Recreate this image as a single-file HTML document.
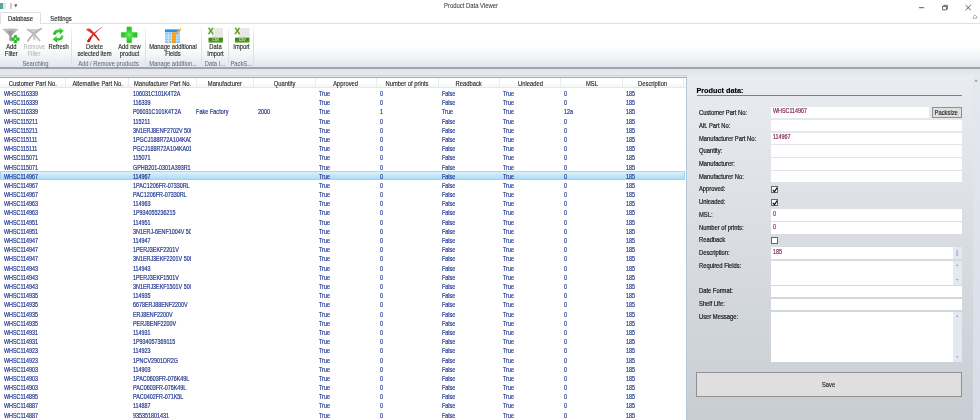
<!DOCTYPE html>
<html lang="en"><head><meta charset="utf-8"><title>Product Data Viewer</title>
<style>
html,body{margin:0;padding:0;}
body{will-change:transform;width:980px;height:420px;overflow:hidden;position:relative;background:#fff;font-family:"Liberation Sans",sans-serif;font-size:6px;color:#2b2b2b;}
div,span{box-sizing:border-box;}
.abs{position:absolute;}
.t{position:absolute;white-space:nowrap;line-height:8px;height:8px;}
.c{text-align:center;}
/* title */
#title{transform:scaleX(.88);left:370.8px;width:200px;top:1.6px;font-size:6.7px;color:#3a3a3a;-webkit-text-stroke:0.06px #3a3a3a;text-align:center;}
/* ribbon */
#ribbon{left:0;top:23.5px;width:980px;height:44px;background:linear-gradient(#ffffff 0%,#ffffff 50%,#f2f5f8 72%,#e2e7ee 96%,#f0f3f6 100%);}
#tabline{left:0;top:22.8px;width:980px;height:1px;background:#dfe1e4;}
#ribline{left:0;top:66.8px;width:980px;height:2.6px;background:linear-gradient(#c9ced5,#858b93 40%,#8a9098 65%,#d3d7dc);}
#band{left:0;top:69.4px;width:980px;height:7.5px;background:linear-gradient(#e1e5ea,#e8ebef);}
#tab1{left:-0.5px;top:11.6px;width:41px;height:12.4px;background:#fff;border:1px solid #dcdee1;border-bottom:none;border-radius:2px 2px 0 0;}
.tabt{transform:scaleX(.88);font-size:6.7px;color:#2a2a2a;top:14.5px;-webkit-text-stroke:0.14px #2a2a2a;}
.rl{transform:scaleX(.88);font-size:6.6px;color:#2a2a2a;-webkit-text-stroke:0.14px #2a2a2a;text-align:center;line-height:6.6px;height:auto;white-space:nowrap;}
.rl.dis{color:#b0b3b7;-webkit-text-stroke:0.04px #b0b3b7;}
.gl{transform:scaleX(.88);font-size:6.6px;color:#646b75;-webkit-text-stroke:0.05px #646b75;text-align:center;top:60px;}
.gsep{position:absolute;top:26px;height:39px;width:1px;background:linear-gradient(rgba(222,226,231,0.2),#dee2e7 40%,#dee2e7);}
/* grid */
.grid{position:absolute;left:0;top:76.8px;width:686.7px;height:343.2px;background:#fff;border-top:1.3px solid #88b3d7;border-right:1px solid #b7c6d6;overflow:hidden;}
.ghead{position:absolute;left:0;top:0;width:686px;height:10.2px;background:linear-gradient(#ffffff,#ffffff 50%,#f4f6f9);border-bottom:1px solid #e4e8ed;}
.gh{transform:scaleX(.88);position:absolute;top:0;height:9.8px;line-height:11.2px;text-align:center;font-size:6.6px;color:#2a2a2a;-webkit-text-stroke:0.14px #2a2a2a;white-space:nowrap;}
.hs{position:absolute;top:0;width:1px;height:9.6px;background:#e9ecef;}
.gr{position:absolute;left:0;width:685px;height:9.19px;}
.gr.sel{background:linear-gradient(#e2f2fc 0%,#c9e8fa 45%,#a6daf6 100%);box-shadow:inset 0 0 0 0.8px #94d1f2;border-radius:1px;}
.gc{position:absolute;top:0;height:9.19px;line-height:11.9px;font-size:6.5px;color:#22398f;white-space:nowrap;overflow:hidden;transform:scaleX(.83);transform-origin:0 50%;-webkit-text-stroke:0.2px #22398f;}

/* panel */
#panel{left:686.7px;top:75.8px;width:293.3px;height:344.2px;background:linear-gradient(#e9ecf0 0%,#dadee3 45%,#c8cdd4 100%);}
#vsb{left:972.5px;top:75.8px;width:7.5px;height:344.2px;background:linear-gradient(#e4e9f0,#d6dde7);}
#pd{left:696.4px;top:86px;font-size:7.3px;font-weight:bold;color:#000;-webkit-text-stroke:0.15px #000;line-height:10px;height:10px;}
#pdl{left:696.5px;top:94.7px;width:265.2px;height:1.7px;background:#7874c6;}
.lb{position:absolute;left:699.3px;transform:scaleX(.88);transform-origin:0 50%;font-size:6.6px;color:#1c1c1c;-webkit-text-stroke:0.2px #111;white-space:nowrap;line-height:8px;height:8px;}
.in{position:absolute;left:770.6px;width:191px;height:11.5px;background:#fff;font-size:6.5px;color:#7c1d4b;-webkit-text-stroke:0.18px #7c1d4b;line-height:7px;padding:0.7px 0 0 2px;white-space:nowrap;}
.in span{display:inline-block;transform:scaleX(.83);transform-origin:0 50%;}
.ck{position:absolute;left:771.2px;width:7.3px;height:6.8px;background:#fff;border:0.6px solid #6a6a6a;}
.btn{position:absolute;background:#dfdfdf;border:0.8px solid #909090;text-align:center;color:#1a1a1a;font-size:6.6px;-webkit-text-stroke:0.12px #1a1a1a;}
.btn span{display:inline-block;transform:scaleX(.88);}
.sb{position:absolute;left:953.4px;width:8.2px;background:#e4e9f1;}

#tan{left:0;top:75.3px;width:686.7px;height:0.8px;background:#d6cec8;}

</style></head><body>
<!-- title bar -->
<div class="abs" style="left:0;top:3px;width:5px;height:6px;background:#2f8f83;border-radius:0.5px;opacity:.8"></div>
<div class="abs" style="left:3px;top:3px;width:3px;height:6px;background:#dfe7ef;"></div>
<div class="abs" style="left:10px;top:3px;width:1.5px;height:6px;background:#c9cdd2;"></div>
<svg class="abs" style="left:14px;top:3.7px" width="3.4" height="3.4" viewBox="0 0 5 5"><path d="M0.5 0.8H4.5" stroke="#333" stroke-width="0.8"/><path d="M0.5 2L2.5 4.3L4.5 2Z" fill="#333"/></svg>
<div id="title" class="t">Product Data Viewer</div>
<svg class="abs" style="left:914px;top:2.6px" width="62" height="10" viewBox="0 0 62 10">
<path d="M5 4.7H10.2" stroke="#333" stroke-width="0.8" fill="none"/>
<rect x="28.7" y="3.3" width="3.6" height="3.6" stroke="#333" stroke-width="0.7" fill="none"/>
<path d="M29.8 3.3V2.3H33.4V5.9H32.3" stroke="#333" stroke-width="0.7" fill="none"/>
<path d="M51.6 2L56.8 7.2M56.8 2L51.6 7.2" stroke="#333" stroke-width="0.8" fill="none"/>
</svg>
<svg class="abs" style="left:972px;top:13.6px" width="6" height="5" viewBox="0 0 6 5"><path d="M0.8 3L3 0.9L5.2 3M1.5 3V4.3H4.5V3" stroke="#777" stroke-width="0.6" fill="none"/></svg>
<!-- tabs -->
<div id="tabline" class="abs"></div>
<div id="ribbon" class="abs"></div>
<div id="tab1" class="abs"></div>
<div class="t tabt c" style="left:0;width:41px;">Database</div>
<div class="t tabt c" style="left:41px;width:40px;">Settings</div>
<div id="ribline" class="abs"></div>
<div id="band" class="abs"></div>
<div id="tan" class="abs"></div>
<!-- ribbon buttons -->
<div class="t rl" style="left:0;width:22.6px;top:44.4px;">Add<br>Filter</div>
<div class="t rl dis" style="left:22px;width:24px;top:44.4px;">Remove<br>Filter</div>
<div class="t rl" style="left:46px;width:25.4px;top:44.4px;">Refresh</div>
<div class="t rl" style="left:72px;width:45px;top:44.4px;">Delete<br>selected item</div>
<div class="t rl" style="left:113px;width:33px;top:44.4px;">Add new<br>product</div>
<div class="t rl" style="left:146px;width:54px;top:44.4px;">Manage additional<br>Fields</div>
<div class="t rl" style="left:203px;width:25px;top:44.4px;">Data<br>Import</div>
<div class="t rl" style="left:229px;width:25px;top:44.4px;">Import</div>
<div class="t gl" style="left:0;width:71px;">Searching</div>
<div class="t gl" style="left:72px;width:73px;">Add / Remove products</div>
<div class="t gl" style="left:146px;width:54px;">Manage addition...</div>
<div class="t gl" style="left:202px;width:26px;">Data I...</div>
<div class="t gl" style="left:229px;width:24px;">PackS...</div>
<div class="gsep" style="left:71px"></div>
<div class="gsep" style="left:145px"></div>
<div class="gsep" style="left:200.5px"></div>
<div class="gsep" style="left:228px"></div>
<div class="gsep" style="left:252.5px"></div>
<!-- icons -->
<svg class="abs" style="left:0;top:26px" width="254" height="18" viewBox="0 0 254 18">
<defs>
<linearGradient id="gfun" x1="0" y1="0" x2="1" y2="0"><stop offset="0" stop-color="#e2e2e2"/><stop offset="0.5" stop-color="#979797"/><stop offset="1" stop-color="#d4d4d4"/></linearGradient>
<linearGradient id="ggr" x1="0" y1="0" x2="0" y2="1"><stop offset="0" stop-color="#55e045"/><stop offset="1" stop-color="#22ad22"/></linearGradient>
<radialGradient id="gplus" cx="0.5" cy="0.5" r="0.6"><stop offset="0" stop-color="#7aea6c"/><stop offset="0.5" stop-color="#2fd02f"/><stop offset="1" stop-color="#18b41c"/></radialGradient>
<linearGradient id="gred" x1="0" y1="0" x2="0" y2="1"><stop offset="0" stop-color="#f23a30"/><stop offset="1" stop-color="#cc100c"/></linearGradient>
<linearGradient id="gxl" x1="0" y1="0" x2="0" y2="1"><stop offset="0" stop-color="#3a7a12"/><stop offset="1" stop-color="#55a024"/></linearGradient>
</defs>
<!-- funnel -->
<path d="M2.4 3.4H18.4L11.7 9.6V15.6L9.3 14.4V9.6Z" fill="url(#gfun)"/>
<ellipse cx="10.4" cy="3.5" rx="8" ry="0.9" fill="#bdbdbd"/>
<path d="M14.1 9.3h2.6v2.5h2.5v2.6h-2.5v2.5h-2.6v-2.5h-2.5v-2.6h2.5z" fill="#25c425" stroke="#1fae22" stroke-width="0.5" stroke-linejoin="round"/>
<circle cx="15.4" cy="13.1" r="1" fill="#b9f5b0"/>
<!-- remove filter (disabled) -->
<path d="M26.6 2.9H41.4L35.6 8.6V14.6L32.9 13.2V8.6Z" fill="#d2d2d2"/>
<path d="M27.9 15C30.5 10.5 36 5.5 41.3 2.6" stroke="#b4b4b4" stroke-width="1.7" fill="none" stroke-linecap="round"/>
<path d="M27.6 3.6C32 6 36.5 10.5 39.6 14.6" stroke="#b9b9b9" stroke-width="1.7" fill="none" stroke-linecap="round"/>
<!-- refresh -->
<g transform="translate(58.3 9.1) scale(0.94 1.12) translate(-59.1 -8.75)">
<path d="M53.6 8.2C53.6 5 57 3.4 60.4 3.9L60.1 1.9L65 4.9L60.9 8.2L60.7 6.2C58.5 5.9 56.3 6.6 55.9 8.9Z" fill="url(#ggr)"/>
<path d="M64.6 9.3C64.6 12.5 61.2 14.1 57.8 13.6L58.1 15.6L53.2 12.6L57.3 9.3L57.5 11.3C59.7 11.6 61.9 10.9 62.3 8.6Z" fill="url(#ggr)"/>
</g>
<!-- delete X -->
<path d="M86.1 3.7C87.2 2.1 89.6 2 90.7 3.2C94.2 6.4 97.6 10.4 99.9 14.3C99.4 14.9 98.8 14.8 98.4 14.4C95.4 10.6 91.4 6.9 86.1 3.7Z" fill="url(#gred)"/>
<path d="M102.1 1.1C96 4.4 91 9.4 87.2 14.4C86.8 16 88 16.7 89.1 16.2C90.6 15.4 90.9 13.5 91.6 12C94.1 8 98.1 4.1 102.3 1.6Z" fill="url(#gred)"/>
<!-- add plus -->
<path d="M126.9 1h4.6v5.6h5.6v4.6h-5.6v5.6h-4.6v-5.6h-5.6v-4.6h5.6z" fill="url(#gplus)" stroke="#2cc62c" stroke-width="0.5" stroke-linejoin="round"/>
<!-- manage fields -->
<rect x="165" y="3.5" width="15" height="13.6" fill="#8ecbf2"/>
<rect x="165" y="3.5" width="15" height="2.9" fill="#1e96e6"/>
<path d="M165 6.6h15M165 9.2h15M165 11.8h15M165 14.4h15M168.4 6.4v10.7M171.8 6.4v10.7M176 6.4v10.7" stroke="#e8f5fd" stroke-width="0.55"/>
<rect x="172" y="6.4" width="4" height="10.7" fill="#ff9a0a"/>
<path d="M172 9.2h4M172 11.8h4M172 14.4h4" stroke="#ffc266" stroke-width="0.5"/>
<path d="M176.3 6.3L180.3 2.3L181.5 3.5L177.5 7.5Z" fill="#f6b02e"/>
<path d="M176.3 6.3L177.5 7.5L175.8 8Z" fill="#c98a2a"/>
<!-- excel 1 -->
<g transform="translate(0 0)">
<rect x="212.3" y="2.2" width="10.4" height="10.5" fill="#ececea" stroke="#dcdcda" stroke-width="0.4"/>
<path d="M215.5 4.5h6.5M215.5 6.3h6.5M215.5 8.1h6.5M213 9.9h9" stroke="#dadad6" stroke-width="0.5"/>
<rect x="208.5" y="11.7" width="14.4" height="4.9" fill="url(#gxl)"/>
<text x="215.7" y="15.4" font-size="3.3" fill="#dcebc9" font-family="Liberation Sans, sans-serif" font-weight="bold" text-anchor="middle">CSV</text>
<text x="208.1" y="8.4" font-size="8.3" fill="#5a9a14" font-family="Liberation Sans, sans-serif" font-weight="bold" stroke="#5a9a14" stroke-width="0.3">X</text>
</g>
<!-- excel 2 -->
<g transform="translate(26.5 0)">
<rect x="212.3" y="2.2" width="10.4" height="10.5" fill="#ececea" stroke="#dcdcda" stroke-width="0.4"/>
<path d="M215.5 4.5h6.5M215.5 6.3h6.5M215.5 8.1h6.5M213 9.9h9" stroke="#dadad6" stroke-width="0.5"/>
<rect x="208.5" y="11.7" width="14.4" height="4.9" fill="url(#gxl)"/>
<text x="215.7" y="15.4" font-size="3.3" fill="#dcebc9" font-family="Liberation Sans, sans-serif" font-weight="bold" text-anchor="middle">CSV</text>
<text x="208.1" y="8.4" font-size="8.3" fill="#5a9a14" font-family="Liberation Sans, sans-serif" font-weight="bold" stroke="#5a9a14" stroke-width="0.3">X</text>
</g>
</svg>
<div class="grid">
<div class="ghead">
<div class="gh" style="left:0.0px;width:65.5px">Customer Part No.</div><div class="hs" style="left:65.0px"></div>
<div class="gh" style="left:65.5px;width:63.2px">Alternative Part No.</div><div class="hs" style="left:128.2px"></div>
<div class="gh" style="left:128.7px;width:67.3px">Manufacturer Part No.</div><div class="hs" style="left:195.5px"></div>
<div class="gh" style="left:196.0px;width:57.8px">Manufacturer</div><div class="hs" style="left:253.3px"></div>
<div class="gh" style="left:253.8px;width:61.2px">Quantity</div><div class="hs" style="left:314.5px"></div>
<div class="gh" style="left:315.0px;width:61.2px">Approved</div><div class="hs" style="left:375.7px"></div>
<div class="gh" style="left:376.2px;width:62.0px">Number of prints</div><div class="hs" style="left:437.7px"></div>
<div class="gh" style="left:438.2px;width:61.3px">Readback</div><div class="hs" style="left:499.0px"></div>
<div class="gh" style="left:499.5px;width:61.0px">Unleaded</div><div class="hs" style="left:560.0px"></div>
<div class="gh" style="left:560.5px;width:61.8px">MSL</div><div class="hs" style="left:621.8px"></div>
<div class="gh" style="left:622.3px;width:61.2px">Description</div><div class="hs" style="left:683.0px"></div>
</div>
<div class="gr" style="top:10.20px"><span class="gc" style="left:3.9px;width:67.7px">WHSC116339</span><span class="gc" style="left:132.6px;width:69.9px">106031C101K4T2A</span><span class="gc" style="left:318.9px;width:62.5px">True</span><span class="gc" style="left:380.1px;width:63.5px">0</span><span class="gc" style="left:442.1px;width:62.7px">False</span><span class="gc" style="left:503.4px;width:62.3px">True</span><span class="gc" style="left:564.4px;width:63.3px">0</span><span class="gc" style="left:626.2px;width:62.5px">185</span></div>
<div class="gr" style="top:19.39px"><span class="gc" style="left:3.9px;width:67.7px">WHSC116339</span><span class="gc" style="left:132.6px;width:69.9px">116339</span><span class="gc" style="left:318.9px;width:62.5px">True</span><span class="gc" style="left:380.1px;width:63.5px">0</span><span class="gc" style="left:442.1px;width:62.7px">False</span><span class="gc" style="left:503.4px;width:62.3px">True</span><span class="gc" style="left:564.4px;width:63.3px">0</span><span class="gc" style="left:626.2px;width:62.5px">185</span></div>
<div class="gr" style="top:28.58px"><span class="gc" style="left:3.9px;width:67.7px">WHSC116339</span><span class="gc" style="left:132.6px;width:69.9px">P06031C101K4T2A</span><span class="gc" style="left:196.3px;width:60px;letter-spacing:0.1px">Fake Factory</span><span class="gc" style="left:257.7px;width:62.5px">2000</span><span class="gc" style="left:318.9px;width:62.5px">True</span><span class="gc" style="left:380.1px;width:63.5px">1</span><span class="gc" style="left:442.1px;width:62.7px">True</span><span class="gc" style="left:503.4px;width:62.3px">True</span><span class="gc" style="left:564.4px;width:63.3px">12a</span><span class="gc" style="left:626.2px;width:62.5px">185</span></div>
<div class="gr" style="top:37.77px"><span class="gc" style="left:3.9px;width:67.7px">WHSC115211</span><span class="gc" style="left:132.6px;width:69.9px">115211</span><span class="gc" style="left:318.9px;width:62.5px">True</span><span class="gc" style="left:380.1px;width:63.5px">0</span><span class="gc" style="left:442.1px;width:62.7px">False</span><span class="gc" style="left:503.4px;width:62.3px">True</span><span class="gc" style="left:564.4px;width:63.3px">0</span><span class="gc" style="left:626.2px;width:62.5px">185</span></div>
<div class="gr" style="top:46.96px"><span class="gc" style="left:3.9px;width:67.7px">WHSC115211</span><span class="gc" style="left:132.6px;width:69.9px">3N1ERJ8ENF2702V 500</span><span class="gc" style="left:318.9px;width:62.5px">True</span><span class="gc" style="left:380.1px;width:63.5px">0</span><span class="gc" style="left:442.1px;width:62.7px">False</span><span class="gc" style="left:503.4px;width:62.3px">True</span><span class="gc" style="left:564.4px;width:63.3px">0</span><span class="gc" style="left:626.2px;width:62.5px">185</span></div>
<div class="gr" style="top:56.15px"><span class="gc" style="left:3.9px;width:67.7px">WHSC115111</span><span class="gc" style="left:132.6px;width:69.9px">1PGCJ188R72A104KA01</span><span class="gc" style="left:318.9px;width:62.5px">True</span><span class="gc" style="left:380.1px;width:63.5px">0</span><span class="gc" style="left:442.1px;width:62.7px">False</span><span class="gc" style="left:503.4px;width:62.3px">True</span><span class="gc" style="left:564.4px;width:63.3px">0</span><span class="gc" style="left:626.2px;width:62.5px">185</span></div>
<div class="gr" style="top:65.34px"><span class="gc" style="left:3.9px;width:67.7px">WHSC115111</span><span class="gc" style="left:132.6px;width:69.9px">PGCJ188R72A104KA01</span><span class="gc" style="left:318.9px;width:62.5px">True</span><span class="gc" style="left:380.1px;width:63.5px">0</span><span class="gc" style="left:442.1px;width:62.7px">False</span><span class="gc" style="left:503.4px;width:62.3px">True</span><span class="gc" style="left:564.4px;width:63.3px">0</span><span class="gc" style="left:626.2px;width:62.5px">185</span></div>
<div class="gr" style="top:74.53px"><span class="gc" style="left:3.9px;width:67.7px">WHSC115071</span><span class="gc" style="left:132.6px;width:69.9px">115071</span><span class="gc" style="left:318.9px;width:62.5px">True</span><span class="gc" style="left:380.1px;width:63.5px">0</span><span class="gc" style="left:442.1px;width:62.7px">False</span><span class="gc" style="left:503.4px;width:62.3px">True</span><span class="gc" style="left:564.4px;width:63.3px">0</span><span class="gc" style="left:626.2px;width:62.5px">185</span></div>
<div class="gr" style="top:83.72px"><span class="gc" style="left:3.9px;width:67.7px">WHSC115071</span><span class="gc" style="left:132.6px;width:69.9px">GPHB201-0301A393R1</span><span class="gc" style="left:318.9px;width:62.5px">True</span><span class="gc" style="left:380.1px;width:63.5px">0</span><span class="gc" style="left:442.1px;width:62.7px">False</span><span class="gc" style="left:503.4px;width:62.3px">True</span><span class="gc" style="left:564.4px;width:63.3px">0</span><span class="gc" style="left:626.2px;width:62.5px">185</span></div>
<div class="gr sel" style="top:92.91px"><span class="gc" style="left:3.9px;width:67.7px">WHSC114967</span><span class="gc" style="left:132.6px;width:69.9px">114967</span><span class="gc" style="left:318.9px;width:62.5px">True</span><span class="gc" style="left:380.1px;width:63.5px">0</span><span class="gc" style="left:442.1px;width:62.7px">False</span><span class="gc" style="left:503.4px;width:62.3px">True</span><span class="gc" style="left:564.4px;width:63.3px">0</span><span class="gc" style="left:626.2px;width:62.5px">185</span></div>
<div class="gr" style="top:102.10px"><span class="gc" style="left:3.9px;width:67.7px">WHSC114967</span><span class="gc" style="left:132.6px;width:69.9px">1PAC1206FR-07330RL</span><span class="gc" style="left:318.9px;width:62.5px">True</span><span class="gc" style="left:380.1px;width:63.5px">0</span><span class="gc" style="left:442.1px;width:62.7px">False</span><span class="gc" style="left:503.4px;width:62.3px">True</span><span class="gc" style="left:564.4px;width:63.3px">0</span><span class="gc" style="left:626.2px;width:62.5px">185</span></div>
<div class="gr" style="top:111.29px"><span class="gc" style="left:3.9px;width:67.7px">WHSC114967</span><span class="gc" style="left:132.6px;width:69.9px">PAC1206FR-07330RL</span><span class="gc" style="left:318.9px;width:62.5px">True</span><span class="gc" style="left:380.1px;width:63.5px">0</span><span class="gc" style="left:442.1px;width:62.7px">False</span><span class="gc" style="left:503.4px;width:62.3px">True</span><span class="gc" style="left:564.4px;width:63.3px">0</span><span class="gc" style="left:626.2px;width:62.5px">185</span></div>
<div class="gr" style="top:120.48px"><span class="gc" style="left:3.9px;width:67.7px">WHSC114963</span><span class="gc" style="left:132.6px;width:69.9px">114963</span><span class="gc" style="left:318.9px;width:62.5px">True</span><span class="gc" style="left:380.1px;width:63.5px">0</span><span class="gc" style="left:442.1px;width:62.7px">False</span><span class="gc" style="left:503.4px;width:62.3px">True</span><span class="gc" style="left:564.4px;width:63.3px">0</span><span class="gc" style="left:626.2px;width:62.5px">185</span></div>
<div class="gr" style="top:129.67px"><span class="gc" style="left:3.9px;width:67.7px">WHSC114963</span><span class="gc" style="left:132.6px;width:69.9px">1P934055236215</span><span class="gc" style="left:318.9px;width:62.5px">True</span><span class="gc" style="left:380.1px;width:63.5px">0</span><span class="gc" style="left:442.1px;width:62.7px">False</span><span class="gc" style="left:503.4px;width:62.3px">True</span><span class="gc" style="left:564.4px;width:63.3px">0</span><span class="gc" style="left:626.2px;width:62.5px">185</span></div>
<div class="gr" style="top:138.86px"><span class="gc" style="left:3.9px;width:67.7px">WHSC114951</span><span class="gc" style="left:132.6px;width:69.9px">114951</span><span class="gc" style="left:318.9px;width:62.5px">True</span><span class="gc" style="left:380.1px;width:63.5px">0</span><span class="gc" style="left:442.1px;width:62.7px">False</span><span class="gc" style="left:503.4px;width:62.3px">True</span><span class="gc" style="left:564.4px;width:63.3px">0</span><span class="gc" style="left:626.2px;width:62.5px">185</span></div>
<div class="gr" style="top:148.05px"><span class="gc" style="left:3.9px;width:67.7px">WHSC114951</span><span class="gc" style="left:132.6px;width:69.9px">3N1ERJ-6ENF1004V 50</span><span class="gc" style="left:318.9px;width:62.5px">True</span><span class="gc" style="left:380.1px;width:63.5px">0</span><span class="gc" style="left:442.1px;width:62.7px">False</span><span class="gc" style="left:503.4px;width:62.3px">True</span><span class="gc" style="left:564.4px;width:63.3px">0</span><span class="gc" style="left:626.2px;width:62.5px">185</span></div>
<div class="gr" style="top:157.24px"><span class="gc" style="left:3.9px;width:67.7px">WHSC114947</span><span class="gc" style="left:132.6px;width:69.9px">114947</span><span class="gc" style="left:318.9px;width:62.5px">True</span><span class="gc" style="left:380.1px;width:63.5px">0</span><span class="gc" style="left:442.1px;width:62.7px">False</span><span class="gc" style="left:503.4px;width:62.3px">True</span><span class="gc" style="left:564.4px;width:63.3px">0</span><span class="gc" style="left:626.2px;width:62.5px">185</span></div>
<div class="gr" style="top:166.43px"><span class="gc" style="left:3.9px;width:67.7px">WHSC114947</span><span class="gc" style="left:132.6px;width:69.9px">1PERJ3EKF2201V</span><span class="gc" style="left:318.9px;width:62.5px">True</span><span class="gc" style="left:380.1px;width:63.5px">0</span><span class="gc" style="left:442.1px;width:62.7px">False</span><span class="gc" style="left:503.4px;width:62.3px">True</span><span class="gc" style="left:564.4px;width:63.3px">0</span><span class="gc" style="left:626.2px;width:62.5px">185</span></div>
<div class="gr" style="top:175.62px"><span class="gc" style="left:3.9px;width:67.7px">WHSC114947</span><span class="gc" style="left:132.6px;width:69.9px">3N1ERJ3EKF2201V 500</span><span class="gc" style="left:318.9px;width:62.5px">True</span><span class="gc" style="left:380.1px;width:63.5px">0</span><span class="gc" style="left:442.1px;width:62.7px">False</span><span class="gc" style="left:503.4px;width:62.3px">True</span><span class="gc" style="left:564.4px;width:63.3px">0</span><span class="gc" style="left:626.2px;width:62.5px">185</span></div>
<div class="gr" style="top:184.81px"><span class="gc" style="left:3.9px;width:67.7px">WHSC114943</span><span class="gc" style="left:132.6px;width:69.9px">114943</span><span class="gc" style="left:318.9px;width:62.5px">True</span><span class="gc" style="left:380.1px;width:63.5px">0</span><span class="gc" style="left:442.1px;width:62.7px">False</span><span class="gc" style="left:503.4px;width:62.3px">True</span><span class="gc" style="left:564.4px;width:63.3px">0</span><span class="gc" style="left:626.2px;width:62.5px">185</span></div>
<div class="gr" style="top:194.00px"><span class="gc" style="left:3.9px;width:67.7px">WHSC114943</span><span class="gc" style="left:132.6px;width:69.9px">1PERJ3EKF1501V</span><span class="gc" style="left:318.9px;width:62.5px">True</span><span class="gc" style="left:380.1px;width:63.5px">0</span><span class="gc" style="left:442.1px;width:62.7px">False</span><span class="gc" style="left:503.4px;width:62.3px">True</span><span class="gc" style="left:564.4px;width:63.3px">0</span><span class="gc" style="left:626.2px;width:62.5px">185</span></div>
<div class="gr" style="top:203.19px"><span class="gc" style="left:3.9px;width:67.7px">WHSC114943</span><span class="gc" style="left:132.6px;width:69.9px">3N1ERJ3EKF1501V 500</span><span class="gc" style="left:318.9px;width:62.5px">True</span><span class="gc" style="left:380.1px;width:63.5px">0</span><span class="gc" style="left:442.1px;width:62.7px">False</span><span class="gc" style="left:503.4px;width:62.3px">True</span><span class="gc" style="left:564.4px;width:63.3px">0</span><span class="gc" style="left:626.2px;width:62.5px">185</span></div>
<div class="gr" style="top:212.38px"><span class="gc" style="left:3.9px;width:67.7px">WHSC114935</span><span class="gc" style="left:132.6px;width:69.9px">114935</span><span class="gc" style="left:318.9px;width:62.5px">True</span><span class="gc" style="left:380.1px;width:63.5px">0</span><span class="gc" style="left:442.1px;width:62.7px">False</span><span class="gc" style="left:503.4px;width:62.3px">True</span><span class="gc" style="left:564.4px;width:63.3px">0</span><span class="gc" style="left:626.2px;width:62.5px">185</span></div>
<div class="gr" style="top:221.57px"><span class="gc" style="left:3.9px;width:67.7px">WHSC114935</span><span class="gc" style="left:132.6px;width:69.9px">6678ERJ88ENF2200V</span><span class="gc" style="left:318.9px;width:62.5px">True</span><span class="gc" style="left:380.1px;width:63.5px">0</span><span class="gc" style="left:442.1px;width:62.7px">False</span><span class="gc" style="left:503.4px;width:62.3px">True</span><span class="gc" style="left:564.4px;width:63.3px">0</span><span class="gc" style="left:626.2px;width:62.5px">185</span></div>
<div class="gr" style="top:230.76px"><span class="gc" style="left:3.9px;width:67.7px">WHSC114935</span><span class="gc" style="left:132.6px;width:69.9px">ERJ8ENF2200V</span><span class="gc" style="left:318.9px;width:62.5px">True</span><span class="gc" style="left:380.1px;width:63.5px">0</span><span class="gc" style="left:442.1px;width:62.7px">False</span><span class="gc" style="left:503.4px;width:62.3px">True</span><span class="gc" style="left:564.4px;width:63.3px">0</span><span class="gc" style="left:626.2px;width:62.5px">185</span></div>
<div class="gr" style="top:239.95px"><span class="gc" style="left:3.9px;width:67.7px">WHSC114935</span><span class="gc" style="left:132.6px;width:69.9px">PERJ8ENF2200V</span><span class="gc" style="left:318.9px;width:62.5px">True</span><span class="gc" style="left:380.1px;width:63.5px">0</span><span class="gc" style="left:442.1px;width:62.7px">False</span><span class="gc" style="left:503.4px;width:62.3px">True</span><span class="gc" style="left:564.4px;width:63.3px">0</span><span class="gc" style="left:626.2px;width:62.5px">185</span></div>
<div class="gr" style="top:249.14px"><span class="gc" style="left:3.9px;width:67.7px">WHSC114931</span><span class="gc" style="left:132.6px;width:69.9px">114931</span><span class="gc" style="left:318.9px;width:62.5px">True</span><span class="gc" style="left:380.1px;width:63.5px">0</span><span class="gc" style="left:442.1px;width:62.7px">False</span><span class="gc" style="left:503.4px;width:62.3px">True</span><span class="gc" style="left:564.4px;width:63.3px">0</span><span class="gc" style="left:626.2px;width:62.5px">185</span></div>
<div class="gr" style="top:258.33px"><span class="gc" style="left:3.9px;width:67.7px">WHSC114931</span><span class="gc" style="left:132.6px;width:69.9px">1P934057369115</span><span class="gc" style="left:318.9px;width:62.5px">True</span><span class="gc" style="left:380.1px;width:63.5px">0</span><span class="gc" style="left:442.1px;width:62.7px">False</span><span class="gc" style="left:503.4px;width:62.3px">True</span><span class="gc" style="left:564.4px;width:63.3px">0</span><span class="gc" style="left:626.2px;width:62.5px">185</span></div>
<div class="gr" style="top:267.52px"><span class="gc" style="left:3.9px;width:67.7px">WHSC114923</span><span class="gc" style="left:132.6px;width:69.9px">114923</span><span class="gc" style="left:318.9px;width:62.5px">True</span><span class="gc" style="left:380.1px;width:63.5px">0</span><span class="gc" style="left:442.1px;width:62.7px">False</span><span class="gc" style="left:503.4px;width:62.3px">True</span><span class="gc" style="left:564.4px;width:63.3px">0</span><span class="gc" style="left:626.2px;width:62.5px">185</span></div>
<div class="gr" style="top:276.71px"><span class="gc" style="left:3.9px;width:67.7px">WHSC114923</span><span class="gc" style="left:132.6px;width:69.9px">1PNCV2901DR2G</span><span class="gc" style="left:318.9px;width:62.5px">True</span><span class="gc" style="left:380.1px;width:63.5px">0</span><span class="gc" style="left:442.1px;width:62.7px">False</span><span class="gc" style="left:503.4px;width:62.3px">True</span><span class="gc" style="left:564.4px;width:63.3px">0</span><span class="gc" style="left:626.2px;width:62.5px">185</span></div>
<div class="gr" style="top:285.90px"><span class="gc" style="left:3.9px;width:67.7px">WHSC114903</span><span class="gc" style="left:132.6px;width:69.9px">114903</span><span class="gc" style="left:318.9px;width:62.5px">True</span><span class="gc" style="left:380.1px;width:63.5px">0</span><span class="gc" style="left:442.1px;width:62.7px">False</span><span class="gc" style="left:503.4px;width:62.3px">True</span><span class="gc" style="left:564.4px;width:63.3px">0</span><span class="gc" style="left:626.2px;width:62.5px">185</span></div>
<div class="gr" style="top:295.09px"><span class="gc" style="left:3.9px;width:67.7px">WHSC114903</span><span class="gc" style="left:132.6px;width:69.9px">1PAC0603FR-076K49L</span><span class="gc" style="left:318.9px;width:62.5px">True</span><span class="gc" style="left:380.1px;width:63.5px">0</span><span class="gc" style="left:442.1px;width:62.7px">False</span><span class="gc" style="left:503.4px;width:62.3px">True</span><span class="gc" style="left:564.4px;width:63.3px">0</span><span class="gc" style="left:626.2px;width:62.5px">185</span></div>
<div class="gr" style="top:304.28px"><span class="gc" style="left:3.9px;width:67.7px">WHSC114903</span><span class="gc" style="left:132.6px;width:69.9px">PAC0603FR-076K49L</span><span class="gc" style="left:318.9px;width:62.5px">True</span><span class="gc" style="left:380.1px;width:63.5px">0</span><span class="gc" style="left:442.1px;width:62.7px">False</span><span class="gc" style="left:503.4px;width:62.3px">True</span><span class="gc" style="left:564.4px;width:63.3px">0</span><span class="gc" style="left:626.2px;width:62.5px">185</span></div>
<div class="gr" style="top:313.47px"><span class="gc" style="left:3.9px;width:67.7px">WHSC114895</span><span class="gc" style="left:132.6px;width:69.9px">PAC0402FR-071K5L</span><span class="gc" style="left:318.9px;width:62.5px">True</span><span class="gc" style="left:380.1px;width:63.5px">0</span><span class="gc" style="left:442.1px;width:62.7px">False</span><span class="gc" style="left:503.4px;width:62.3px">True</span><span class="gc" style="left:564.4px;width:63.3px">0</span><span class="gc" style="left:626.2px;width:62.5px">185</span></div>
<div class="gr" style="top:322.66px"><span class="gc" style="left:3.9px;width:67.7px">WHSC114887</span><span class="gc" style="left:132.6px;width:69.9px">114887</span><span class="gc" style="left:318.9px;width:62.5px">True</span><span class="gc" style="left:380.1px;width:63.5px">0</span><span class="gc" style="left:442.1px;width:62.7px">False</span><span class="gc" style="left:503.4px;width:62.3px">True</span><span class="gc" style="left:564.4px;width:63.3px">0</span><span class="gc" style="left:626.2px;width:62.5px">185</span></div>
<div class="gr" style="top:331.85px"><span class="gc" style="left:3.9px;width:67.7px">WHSC114887</span><span class="gc" style="left:132.6px;width:69.9px">935351801431</span><span class="gc" style="left:318.9px;width:62.5px">True</span><span class="gc" style="left:380.1px;width:63.5px">0</span><span class="gc" style="left:442.1px;width:62.7px">False</span><span class="gc" style="left:503.4px;width:62.3px">True</span><span class="gc" style="left:564.4px;width:63.3px">0</span><span class="gc" style="left:626.2px;width:62.5px">185</span></div>
</div>
<div id="panel" class="abs"></div>
<div id="vsb" class="abs"></div>
<svg class="abs" style="left:974.3px;top:79.4px" width="4" height="3" viewBox="0 0 4 3"><path d="M0.3 2.6L2 0.5L3.7 2.6Z" fill="#8a8f96"/></svg>
<div id="pd" class="t">Product data:</div>
<div id="pdl" class="abs"></div>
<div class="lb" style="top:108.7px">Customer Part No:</div>
<div class="in" style="top:106.6px;width:158px"><span>WHSC114967</span></div>
<div class="btn" style="left:931.6px;top:106.6px;width:30px;height:11.6px;line-height:10.4px;"><span>Packsize</span></div>
<div class="lb" style="top:121.6px">Alt. Part No:</div>
<div class="in" style="top:119.6px"></div>
<div class="lb" style="top:134.5px">Manufacturer Part No:</div>
<div class="in" style="top:132.5px"><span>114967</span></div>
<div class="lb" style="top:147.4px">Quantity:</div>
<div class="in" style="top:145.4px"></div>
<div class="lb" style="top:160.3px">Manufacturer:</div>
<div class="in" style="top:158.3px"></div>
<div class="lb" style="top:173.2px">Manufacturer No:</div>
<div class="in" style="top:170.8px"></div>
<div class="lb" style="top:185.4px">Approved:</div>
<div class="ck" style="top:186px"></div>
<svg class="abs" style="left:772px;top:186.6px" width="6" height="6" viewBox="0 0 6 6"><path d="M0.8 2.9L2.4 4.7L5.2 0.7" stroke="#111" stroke-width="1.15" fill="none"/></svg>
<div class="lb" style="top:198.3px">Unleaded:</div>
<div class="ck" style="top:198.9px"></div>
<svg class="abs" style="left:772px;top:199.5px" width="6" height="6" viewBox="0 0 6 6"><path d="M0.8 2.9L2.4 4.7L5.2 0.7" stroke="#111" stroke-width="1.15" fill="none"/></svg>
<div class="lb" style="top:210.9px">MSL:</div>
<div class="in" style="top:209px"><span>0</span></div>
<div class="lb" style="top:223.9px">Number of prints:</div>
<div class="in" style="top:222px"><span>0</span></div>
<div class="lb" style="top:236.4px">Readback</div>
<div class="ck" style="top:237px"></div>
<div class="lb" style="top:249.2px">Description:</div>
<div class="in" style="top:247px;width:182.8px;height:12px"><span>185</span></div>
<div class="sb" style="top:247px;height:12px"></div>
<div class="lb" style="top:262px">Required Fields:</div>
<div class="in" style="top:260.5px;width:182.8px;height:24px"></div>
<div class="sb" style="top:260.5px;height:24px"></div>
<div class="lb" style="top:287.4px">Date Format:</div>
<div class="in" style="top:285.8px"></div>
<div class="lb" style="top:300.3px">Shelf Life:</div>
<div class="in" style="top:298.7px"></div>
<div class="lb" style="top:313.1px">User Message:</div>
<div class="in" style="top:311.6px;width:182.8px;height:50px"></div>
<div class="sb" style="top:311.6px;height:50px"></div>
<svg class="abs" style="left:953.4px;top:247px" width="9" height="115" viewBox="0 0 9 115">
<g fill="#74829a">
<path d="M3 4.3L4.2 2.9L5.4 4.3Z"/><path d="M3 7.6L4.2 9L5.4 7.6Z"/><rect x="3" y="5.6" width="2.4" height="0.7"/>
<path d="M3 18.8L4.2 17.4L5.4 18.8Z"/><path d="M3 32.2L4.2 33.6L5.4 32.2Z"/>
<path d="M3 69.8L4.2 68.4L5.4 69.8Z"/><path d="M3 109.2L4.2 110.6L5.4 109.2Z"/>
</g></svg>
<div class="btn" style="left:696.2px;top:372.2px;width:265.4px;height:25.2px;line-height:24px;"><span>Save</span></div>
</body></html>
